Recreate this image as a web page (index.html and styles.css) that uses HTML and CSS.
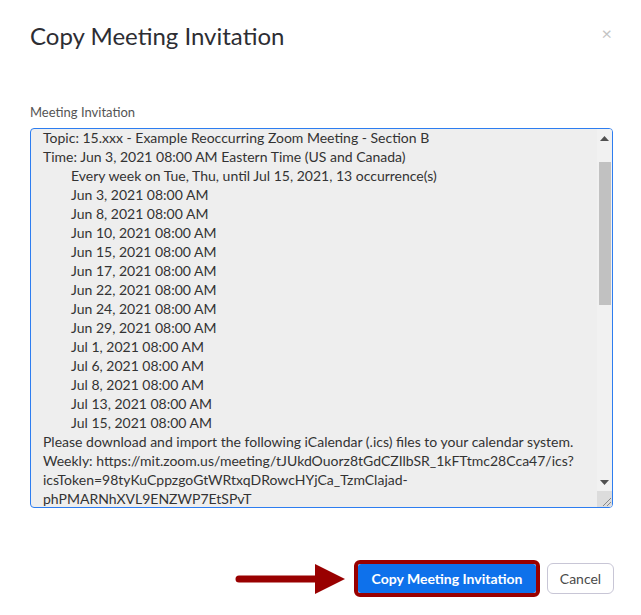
FILE: index.html
```html
<!DOCTYPE html>
<html>
<head>
<meta charset="utf-8">
<link rel="stylesheet" href="styles.css">
</head>
<body>
<div class="dialog">
  <div class="header">
    <h1 class="title">Copy Meeting Invitation</h1>
    <span class="close">×</span>
  </div>
  <div class="label">Meeting Invitation</div>
  <div class="textbox">
    <div class="content">
      <div class="line">Topic: 15.xxx - Example Reoccurring Zoom Meeting - Section B</div>
      <div class="line">Time: Jun 3, 2021 08:00 AM Eastern Time (US and Canada)</div>
      <div class="line indent">Every week on Tue, Thu, until Jul 15, 2021, 13 occurrence(s)</div>
      <div class="line indent">Jun 3, 2021 08:00 AM</div>
      <div class="line indent">Jun 8, 2021 08:00 AM</div>
      <div class="line indent">Jun 10, 2021 08:00 AM</div>
      <div class="line indent">Jun 15, 2021 08:00 AM</div>
      <div class="line indent">Jun 17, 2021 08:00 AM</div>
      <div class="line indent">Jun 22, 2021 08:00 AM</div>
      <div class="line indent">Jun 24, 2021 08:00 AM</div>
      <div class="line indent">Jun 29, 2021 08:00 AM</div>
      <div class="line indent">Jul 1, 2021 08:00 AM</div>
      <div class="line indent">Jul 6, 2021 08:00 AM</div>
      <div class="line indent">Jul 8, 2021 08:00 AM</div>
      <div class="line indent">Jul 13, 2021 08:00 AM</div>
      <div class="line indent">Jul 15, 2021 08:00 AM</div>
      <div class="line">Please download and import the following iCalendar (.ics) files to your calendar system.</div>
      <div class="line">Weekly: https://mit.zoom.us/meeting/tJUkdOuorz8tGdCZIlbSR_1kFTtmc28Cca47/ics?</div>
      <div class="line">icsToken=98tyKuCppzgoGtWRtxqDRowcHYjCa_TzmClajad-</div>
      <div class="line">phPMARNhXVL9ENZWP7EtSPvT</div>
    </div>
    <div class="scrollbar">
      <div class="sb-btn"><svg width="9" height="5" viewBox="0 0 9 5"><polygon points="0,5 9,5 4.5,0" fill="#505050"/></svg></div>
      <div class="sb-track"><div class="sb-thumb"></div></div>
      <div class="sb-btn"><svg width="9" height="5" viewBox="0 0 9 5"><polygon points="0,0 9,0 4.5,5" fill="#505050"/></svg></div>
      <div class="sb-corner"><svg width="15" height="16" viewBox="0 0 15 16"><line x1="6" y1="15" x2="14" y2="7" stroke="#888" stroke-width="1"/><line x1="10" y1="15" x2="14" y2="11" stroke="#888" stroke-width="1"/></svg></div>
    </div>
  </div>
  <div class="footer">
    <svg class="arrow" width="112" height="32" viewBox="0 0 112 32">
      <line x1="5" y1="16" x2="84" y2="16" stroke="#990000" stroke-width="7" stroke-linecap="round"/>
      <polygon points="81,1 111,16 81,31" fill="#990000"/>
    </svg>
    <div class="highlight"><button class="btn-primary">Copy Meeting Invitation</button></div>
    <button class="btn-cancel">Cancel</button>
  </div>
</div>
</body>
</html>
```
FILE: styles.css
```css
html, body {
  margin: 0;
  padding: 0;
  background: #ffffff;
}
body {
  font-family: Lato, "Open Sans", sans-serif;
  color: #333;
}
.dialog {
  width: 641px;
  height: 615px;
  box-sizing: border-box;
  padding: 20px 28px 0 30px;
}
.header {
  display: flex;
  justify-content: space-between;
  align-items: flex-start;
  height: 32px;
}
.title {
  margin: 0;
  font-size: 24px;
  font-weight: 400;
  line-height: 32px;
  color: #2d2d33;
}
.close {
  font-size: 18px;
  line-height: 22px;
  color: #c4c4c4;
  margin-top: 2px;
  margin-right: 1px;
}
.label {
  margin-top: 51px;
  font-size: 13px;
  line-height: 18px;
  color: #555;
}
.textbox {
  margin-top: 7px;
  width: 583px;
  height: 380px;
  box-sizing: border-box;
  border: 1px solid #2d7df0;
  border-radius: 4px;
  background: #eeeeee;
  display: flex;
  overflow: hidden;
}
.content {
  flex: 1;
  padding: 0 0 0 12px;
  margin-top: -1px;
  overflow: hidden;
  font-size: 14px;
  line-height: 19px;
  color: #333;
}
.line {
  white-space: nowrap;
}
.indent {
  padding-left: 28px;
}
.scrollbar {
  width: 15px;
  display: flex;
  flex-direction: column;
  background: #f1f1f1;
}
.sb-btn {
  height: 18px;
  display: flex;
  align-items: center;
  justify-content: center;
}
.sb-track {
  flex: 1;
  padding: 15px 1px 0 2px;
}
.sb-thumb {
  height: 143px;
  background: #c1c1c1;
}
.sb-corner {
  height: 16px;
  background: #dcdcdc;
  display: flex;
  align-items: flex-end;
  justify-content: flex-end;
}
.sb-corner svg {
  display: block;
}
.footer {
  margin-top: 52px;
  display: flex;
  justify-content: flex-end;
  align-items: center;
  gap: 7px;
  margin-right: -1px;
}
.arrow {
  display: block;
  margin-right: 1px;
}
.highlight {
  border: 4px solid #990000;
  border-radius: 6px;
  padding: 0;
  display: flex;
}
.btn-primary {
  font-family: Lato, "Open Sans", sans-serif;
  font-size: 14px;
  font-weight: 700;
  color: #ffffff;
  background: #0e71eb;
  border: none;
  border-radius: 3px;
  width: 178px;
  height: 29px;
  padding: 0;
}
.btn-cancel {
  font-family: Lato, "Open Sans", sans-serif;
  font-size: 14px;
  color: #4a4a4a;
  background: #ffffff;
  border: 1px solid #c8c6d6;
  border-radius: 6px;
  width: 67px;
  height: 31px;
  padding: 0;
}
```
